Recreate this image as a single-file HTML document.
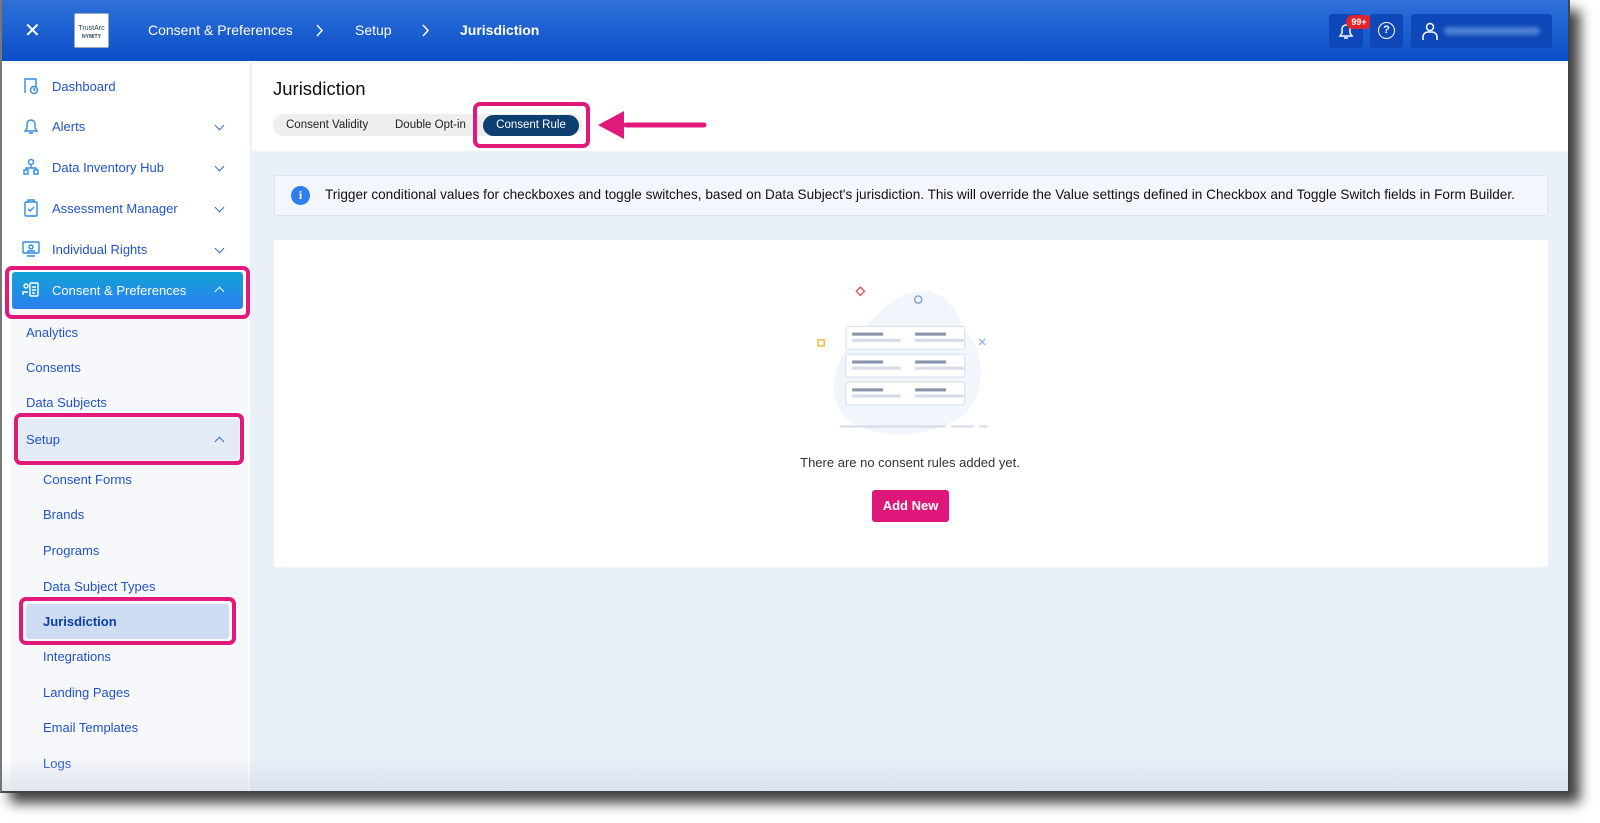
<!DOCTYPE html>
<html><head><meta charset="utf-8"><style>
*{box-sizing:border-box;margin:0;padding:0}
body{width:1600px;height:823px;background:#fff;font-family:"Liberation Sans",sans-serif;position:relative;overflow:hidden}
.a{position:absolute}
.win{left:0;top:0;width:1570px;height:793px;background:#eaf0f8;border-right:2px solid #444;border-bottom:2px solid #444;border-left:2px solid #777;box-shadow:10px 10px 12px rgba(0,0,0,.75);overflow:hidden}
.hdr{left:0;top:0;width:1570px;height:61px;background:linear-gradient(180deg,#2f70d8,#0b4fc8)}
.ht{color:#fff;font-size:14px;top:22px}
.side{left:0;top:61px;width:248px;height:732px;background:#fff}
.nav{left:50px;font-size:13px;color:#2153c8}
.chev{left:214px;width:7px;height:7px;border-right:1.3px solid #3a66c8;border-bottom:1.3px solid #3a66c8;transform:rotate(45deg)}
.up{transform:rotate(-135deg)}
.pink{border:4px solid #e0197a;border-radius:7px}
.sub{font-size:13px;color:#2153c8}
</style></head><body>
<div class="a win">
<div class="a hdr"></div>
<div class="a" style="left:22px;top:23px;color:#fff;font-size:20px;line-height:16px">✕</div>
<div class="a" style="left:72px;top:13px;width:35px;height:35px;background:#fff;border:1px solid #9ab;border-radius:2px;font-size:7px;color:#245;text-align:center;padding-top:11px;line-height:8px">TrustArc<br><span style="font-size:5px;font-weight:bold">NYMITY</span></div>
<div class="a ht" style="left:146px">Consent &amp; Preferences</div>
<svg class="a" style="left:314px;top:24px" width="8" height="13"><path d="M1 1l5 5.5L1 12" fill="none" stroke="#fff" stroke-width="1.5"/></svg>
<div class="a ht" style="left:353px">Setup</div>
<svg class="a" style="left:420px;top:24px" width="8" height="13"><path d="M1 1l5 5.5L1 12" fill="none" stroke="#fff" stroke-width="1.5"/></svg>
<div class="a ht" style="left:458px;font-weight:bold">Jurisdiction</div>
<div class="a" style="left:1327px;top:14px;width:34px;height:34px;background:#0d47b8;border-radius:3px"></div>
<svg class="a" style="left:1334px;top:21px" width="20" height="20" viewBox="0 0 20 20" fill="none" stroke="#fff" stroke-width="1.5"><path d="M4 15h12l-2-3V8a4 4 0 0 0-8 0v4z M8 17h4"/></svg>
<div class="a" style="left:1344px;top:15px;width:26px;height:14px;background:#e0262a;border-radius:7px;color:#fff;font-size:9px;font-weight:bold;text-align:center;line-height:14px">99+</div>
<div class="a" style="left:1368px;top:14px;width:33px;height:34px;background:#0d47b8;border-radius:3px"></div>
<div class="a" style="left:1376px;top:22px;width:17px;height:17px;border:1.6px solid #fff;border-radius:50%;color:#fff;font-size:11px;font-weight:bold;text-align:center;line-height:14px">?</div>
<div class="a" style="left:1409px;top:14px;width:141px;height:34px;background:#0d47b8;border-radius:3px"></div>
<svg class="a" style="left:1418px;top:21px" width="20" height="20" viewBox="0 0 20 20" fill="none" stroke="#fff" stroke-width="1.5"><circle cx="10" cy="6" r="3.5"/><path d="M3 19v-3a5 5 0 0 1 5-5h4a5 5 0 0 1 5 5v3"/></svg>
<div class="a" style="left:1442px;top:27px;width:96px;height:8px;background:#4f82d6;border-radius:4px;filter:blur(2px)"></div>

<div class="a side"></div>
<div class="a" style="left:9px;top:311px;width:237px;height:482px;background:#f6f8fc"></div>
<svg class="a" style="left:20px;top:77px" width="18" height="18" viewBox="0 0 18 18" fill="none" stroke="#2f8be0" stroke-width="1.4"><path d="M3 16V2h11v8"/><circle cx="12" cy="13" r="3.5"/><path d="M12 11v2h1.5"/></svg>
<div class="a nav" style="top:79px">Dashboard</div>
<svg class="a" style="left:20px;top:117px" width="18" height="18" viewBox="0 0 18 18" fill="none" stroke="#2f8be0" stroke-width="1.4"><path d="M3 14h12l-2-3V7a4 4 0 0 0-8 0v4z M7 16h4"/></svg>
<div class="a nav" style="top:119px">Alerts</div><div class="a chev" style="top:122px"></div>
<svg class="a" style="left:20px;top:158px" width="18" height="18" viewBox="0 0 18 18" fill="none" stroke="#2f8be0" stroke-width="1.4"><circle cx="9" cy="4" r="2.5"/><rect x="2" y="12" width="4" height="4"/><rect x="12" y="12" width="4" height="4"/><path d="M9 6.5V10M4 12V10h10v2"/></svg>
<div class="a nav" style="top:160px">Data Inventory Hub</div><div class="a chev" style="top:163px"></div>
<svg class="a" style="left:20px;top:199px" width="18" height="18" viewBox="0 0 18 18" fill="none" stroke="#2f8be0" stroke-width="1.4"><rect x="3" y="3" width="12" height="14" rx="1"/><path d="M6 3V1h6v2M6 10l2 2 4-4"/></svg>
<div class="a nav" style="top:201px">Assessment Manager</div><div class="a chev" style="top:204px"></div>
<svg class="a" style="left:19px;top:240px" width="20" height="18" viewBox="0 0 20 18" fill="none" stroke="#2f8be0" stroke-width="1.4"><rect x="2" y="2" width="16" height="11" rx="1"/><circle cx="10" cy="7" r="2"/><path d="M6 16h8M7 13v-2h6v2"/></svg>
<div class="a nav" style="top:242px">Individual Rights</div><div class="a chev" style="top:245px"></div>

<div class="a pink" style="left:3px;top:266px;width:245px;height:53px"></div>
<div class="a" style="left:10px;top:272px;width:231px;height:37px;border-radius:3px;background:linear-gradient(180deg,#11a2d6,#2c7fee)"></div>
<svg class="a" style="left:20px;top:281px" width="18" height="18" viewBox="0 0 18 18" fill="none" stroke="#fff" stroke-width="1.4"><circle cx="4" cy="5" r="2"/><path d="M1 14v-3h5"/><rect x="8" y="2" width="8" height="13" rx="1"/><path d="M10 6h4M10 9h4M10 12h3"/></svg>
<div class="a" style="left:50px;top:283px;font-size:13px;color:#fff">Consent &amp; Preferences</div>
<div class="a chev up" style="top:288px;border-color:#fff"></div>

<div class="a sub" style="left:24px;top:325px">Analytics</div>
<div class="a sub" style="left:24px;top:360px">Consents</div>
<div class="a sub" style="left:24px;top:395px">Data Subjects</div>
<div class="a pink" style="left:12px;top:413px;width:230px;height:52px"></div>
<div class="a" style="left:17px;top:419px;width:220px;height:41px;background:#e3ebf8;border-radius:3px"></div>
<div class="a sub" style="left:24px;top:432px">Setup</div>
<div class="a chev up" style="top:438px"></div>
<div class="a sub" style="left:41px;top:472px">Consent Forms</div>
<div class="a sub" style="left:41px;top:507px">Brands</div>
<div class="a sub" style="left:41px;top:543px">Programs</div>
<div class="a sub" style="left:41px;top:579px">Data Subject Types</div>
<div class="a pink" style="left:17px;top:597px;width:217px;height:48px"></div>
<div class="a" style="left:24px;top:604px;width:203px;height:35px;background:#cddcf3;border-radius:3px"></div>
<div class="a sub" style="left:41px;top:614px;font-weight:bold;color:#0c3fa6">Jurisdiction</div>
<div class="a sub" style="left:41px;top:649px">Integrations</div>
<div class="a sub" style="left:41px;top:685px">Landing Pages</div>
<div class="a sub" style="left:41px;top:720px">Email Templates</div>
<div class="a sub" style="left:41px;top:756px">Logs</div>

<div class="a" style="left:250px;top:61px;width:1320px;height:90px;background:#fff"></div>
<div class="a" style="left:271px;top:78px;font-size:18.5px;color:#111">Jurisdiction</div>
<div class="a" style="left:271px;top:114px;width:309px;height:22px;background:#eeeeee;border-radius:11px"></div>
<div class="a" style="left:284px;top:119px;font-size:11.5px;color:#222">Consent Validity</div>
<div class="a" style="left:393px;top:119px;font-size:11.5px;color:#222">Double Opt-in</div>
<div class="a" style="left:481px;top:115px;width:96px;height:21px;background:#0d3f70;border-radius:11px;color:#fff;font-size:11.5px;text-align:center;line-height:21px">Consent Rule</div>
<div class="a pink" style="left:471px;top:102px;width:117px;height:46px"></div>
<svg class="a" style="left:594px;top:108px" width="115" height="34"><path d="M30 17H108" stroke="#e0197a" stroke-width="5" stroke-linecap="round"/><path d="M2 17L28 3V31Z" fill="#e0197a"/></svg>

<div class="a" style="left:272px;top:175px;width:1274px;height:41px;background:#f3f7fd;border:1px solid #d9e5f6;border-radius:3px"></div>
<div class="a" style="left:289px;top:186px;width:19px;height:19px;border-radius:50%;background:#2d7ff0;color:#fff;font-size:12px;font-weight:bold;text-align:center;line-height:19px;font-family:'Liberation Serif',serif">i</div>
<div class="a" style="left:323px;top:187px;font-size:13.6px;color:#111;white-space:nowrap">Trigger conditional values for checkboxes and toggle switches, based on Data Subject's jurisdiction. This will override the Value settings defined in Checkbox and Toggle Switch fields in Form Builder.</div>

<div class="a" style="left:272px;top:240px;width:1274px;height:327px;background:#fff;border-radius:2px"></div>
<svg class="a" style="left:815px;top:282px" width="190" height="160" viewBox="0 0 180 155">
<path d="M60 28C90 -2 128 3 138 43C168 70 160 125 128 136C90 156 32 150 18 120C3 85 33 53 60 28Z" fill="#f1f6fc"/>
<rect x="26" y="43" width="115" height="22" rx="2" fill="#fff" stroke="#d6dfec"/>
<rect x="26" y="70" width="115" height="22" rx="2" fill="#fff" stroke="#d6dfec"/>
<rect x="26" y="97" width="115" height="22" rx="2" fill="#fff" stroke="#d6dfec"/>
<g fill="#8a94ac"><rect x="32" y="49" width="30" height="3"/><rect x="93" y="49" width="30" height="3"/><rect x="32" y="76" width="30" height="3"/><rect x="93" y="76" width="30" height="3"/><rect x="32" y="103" width="30" height="3"/><rect x="93" y="103" width="30" height="3"/></g>
<g fill="#d6dcea"><rect x="32" y="55" width="47" height="3"/><rect x="93" y="55" width="47" height="3"/><rect x="32" y="82" width="47" height="3"/><rect x="93" y="82" width="47" height="3"/><rect x="32" y="109" width="47" height="3"/><rect x="93" y="109" width="47" height="3"/><rect x="20" y="139" width="103" height="2"/><rect x="128" y="139" width="22" height="2"/><rect x="155" y="139" width="8" height="2"/></g>
<path d="M40 5l4 4-4 4-4-4z" fill="none" stroke="#e34c4c" stroke-width="1.3"/>
<circle cx="96" cy="17" r="3.5" fill="none" stroke="#7fa0c8" stroke-width="1.3"/>
<rect x="-1" y="56" width="6" height="6" fill="none" stroke="#f5b030" stroke-width="1.3"/>
<path d="M155 55l6 6M161 55l-6 6" stroke="#8eaee8" stroke-width="1.2"/>
</svg>
<div class="a" style="left:772px;top:455px;width:272px;text-align:center;font-size:13px;color:#333">There are no consent rules added yet.</div>
<div class="a" style="left:870px;top:490px;width:77px;height:32px;background:#e0177a;border-radius:3px;color:#fff;font-size:13px;font-weight:bold;text-align:center;line-height:32px">Add New</div>
<div class="a" style="left:0;top:755px;width:1570px;height:38px;background:linear-gradient(180deg,rgba(200,210,225,0),rgba(200,210,225,.5))"></div>
</div>
</body></html>
